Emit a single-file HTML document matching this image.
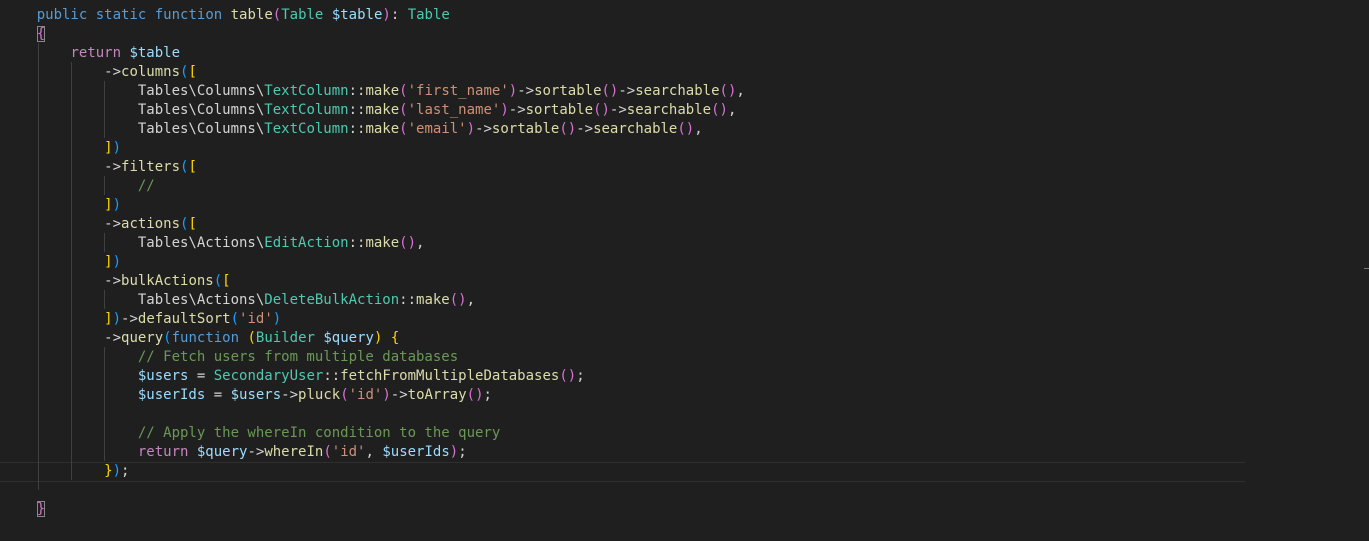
<!DOCTYPE html>
<html><head><meta charset="utf-8"><style>
html,body{margin:0;padding:0;background:#1f1f1f;width:1369px;height:541px;overflow:hidden}
.code{position:absolute;left:3px;top:6px;font-family:"DejaVu Sans Mono","Liberation Mono",monospace;font-size:14px;line-height:19px;color:#d4d4d4;white-space:pre}
.k{color:#569cd6}.f{color:#dcdcaa}.c{color:#4ec9b0}.v{color:#9cdcfe}.s{color:#ce9178}.m{color:#6a9955}.r{color:#c586c0}
.b1{color:#ffd700}.b2{color:#da70d6}.b3{color:#179fff}
.box{outline:1px solid #888;outline-offset:-1px}
.g{position:absolute;width:1px;background:#404040}
.hl{position:absolute;left:0;width:1245px;top:462px;height:18px;border-top:1px solid #2f2f2f;border-bottom:1px solid #2f2f2f}
</style></head><body>
<div class="hl"></div>
<div class="g" style="left:38px;top:43px;height:447px"></div>
<div class="g" style="left:71px;top:62px;height:418px"></div>
<div class="g" style="left:104px;top:81px;height:57px"></div>
<div class="g" style="left:104px;top:176px;height:19px"></div>
<div class="g" style="left:104px;top:233px;height:19px"></div>
<div class="g" style="left:104px;top:290px;height:19px"></div>
<div class="g" style="left:104px;top:347px;height:114px"></div>
<div style="position:absolute;left:1364px;top:268px;width:5px;height:1px;background:#777"></div>
<div class="code">    <span class="k">public</span> <span class="k">static</span> <span class="k">function</span> <span class="f">table</span><span class="b2">(</span><span class="c">Table</span> <span class="v">$table</span><span class="b2">)</span>: <span class="c">Table</span>
    <span class="b2 box">{</span>
        <span class="r">return</span> <span class="v">$table</span>
            -&gt;<span class="f">columns</span><span class="b3">(</span><span class="b1">[</span>
                Tables\Columns\<span class="c">TextColumn</span>::<span class="f">make</span><span class="b2">(</span><span class="s">'first_name'</span><span class="b2">)</span>-&gt;<span class="f">sortable</span><span class="b2">()</span>-&gt;<span class="f">searchable</span><span class="b2">()</span>,
                Tables\Columns\<span class="c">TextColumn</span>::<span class="f">make</span><span class="b2">(</span><span class="s">'last_name'</span><span class="b2">)</span>-&gt;<span class="f">sortable</span><span class="b2">()</span>-&gt;<span class="f">searchable</span><span class="b2">()</span>,
                Tables\Columns\<span class="c">TextColumn</span>::<span class="f">make</span><span class="b2">(</span><span class="s">'email'</span><span class="b2">)</span>-&gt;<span class="f">sortable</span><span class="b2">()</span>-&gt;<span class="f">searchable</span><span class="b2">()</span>,
            <span class="b1">]</span><span class="b3">)</span>
            -&gt;<span class="f">filters</span><span class="b3">(</span><span class="b1">[</span>
                <span class="m">//</span>
            <span class="b1">]</span><span class="b3">)</span>
            -&gt;<span class="f">actions</span><span class="b3">(</span><span class="b1">[</span>
                Tables\Actions\<span class="c">EditAction</span>::<span class="f">make</span><span class="b2">()</span>,
            <span class="b1">]</span><span class="b3">)</span>
            -&gt;<span class="f">bulkActions</span><span class="b3">(</span><span class="b1">[</span>
                Tables\Actions\<span class="c">DeleteBulkAction</span>::<span class="f">make</span><span class="b2">()</span>,
            <span class="b1">]</span><span class="b3">)</span>-&gt;<span class="f">defaultSort</span><span class="b3">(</span><span class="s">'id'</span><span class="b3">)</span>
            -&gt;<span class="f">query</span><span class="b3">(</span><span class="k">function</span> <span class="b1">(</span><span class="c">Builder</span> <span class="v">$query</span><span class="b1">)</span> <span class="b1">{</span>
                <span class="m">// Fetch users from multiple databases</span>
                <span class="v">$users</span> = <span class="c">SecondaryUser</span>::<span class="f">fetchFromMultipleDatabases</span><span class="b2">()</span>;
                <span class="v">$userIds</span> = <span class="v">$users</span>-&gt;<span class="f">pluck</span><span class="b2">(</span><span class="s">'id'</span><span class="b2">)</span>-&gt;<span class="f">toArray</span><span class="b2">()</span>;

                <span class="m">// Apply the whereIn condition to the query</span>
                <span class="r">return</span> <span class="v">$query</span>-&gt;<span class="f">whereIn</span><span class="b2">(</span><span class="s">'id'</span>, <span class="v">$userIds</span><span class="b2">)</span>;
            <span class="b1">}</span><span class="b3">)</span>;

    <span class="b2 box">}</span></div>
</body></html>
